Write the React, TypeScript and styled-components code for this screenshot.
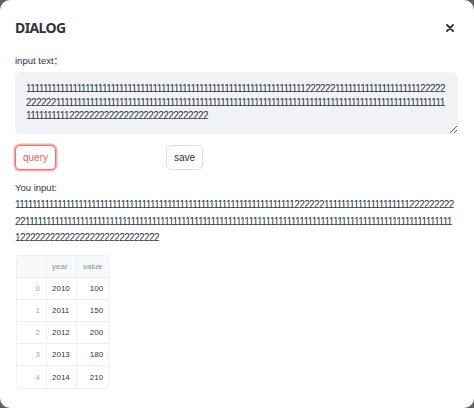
import styled, { createGlobalStyle } from "styled-components";

const GlobalStyle = createGlobalStyle`
  html, body {
    margin: 0;
    padding: 0;
    background: #5e5f63;
  }
  body {
    font-family: "Liberation Sans", Arial, sans-serif;
    color: #31333f;
  }
`;

// the same text, cut where each box wraps it
const TEXTAREA_LINES = [
  "1".repeat(66) + "2".repeat(6) + "1".repeat(20) + "2".repeat(5),
  "2".repeat(6) + "1".repeat(92),
  "1".repeat(10) + "2".repeat(28)
];

const OUTPUT_LINES = [
  "1".repeat(66) + "2".repeat(6) + "1".repeat(20) + "2".repeat(9),
  "2".repeat(2) + "1".repeat(101),
  "1" + "2".repeat(28)
];

const ROWS = [
  { year: 2010, value: 100 },
  { year: 2011, value: 150 },
  { year: 2012, value: 200 },
  { year: 2013, value: 180 },
  { year: 2014, value: 210 }
];

export default function App() {
  return (
    <>
      <GlobalStyle />
      <Dialog>
        <Header>
          <Title>DIALOG</Title>
          <CloseButton aria-label="Close">
            <svg width="8" height="8" viewBox="0 0 8 8">
              <path
                d="M1 1 L7 7 M7 1 L1 7"
                stroke="#31333f"
                strokeWidth="1.8"
                strokeLinecap="round"
              />
            </svg>
          </CloseButton>
        </Header>

        <Label>input text：</Label>
        <TextArea
          defaultValue={TEXTAREA_LINES.join("\n")}
          wrap="off"
          spellCheck={false}
        />

        <ButtonRow>
          <div>
            <Button $focused>query</Button>
          </div>
          <div>
            <Button>save</Button>
          </div>
          <div />
        </ButtonRow>

        <Output>
          <Caption>You input:</Caption>
          <Digits>{OUTPUT_LINES.join("\n")}</Digits>
        </Output>

        <Table>
          <thead>
            <tr>
              <HeadCell $index />
              <HeadCell>year</HeadCell>
              <HeadCell $numeric>value</HeadCell>
            </tr>
          </thead>
          <tbody>
            {ROWS.map((row, idx) => (
              <tr key={row.year}>
                <IndexCell>{idx}</IndexCell>
                <Cell>{row.year}</Cell>
                <Cell $numeric>{row.value}</Cell>
              </tr>
            ))}
          </tbody>
        </Table>
      </Dialog>
    </>
  );
}

const Dialog = styled.div`
  width: 474px;
  height: 408px;
  box-sizing: border-box;
  background: #ffffff;
  border-radius: 10px;
  padding: 18px 16px 0 15px;
  display: flex;
  flex-direction: column;
  align-items: stretch;
`;

const Header = styled.div`
  display: flex;
  justify-content: space-between;
  align-items: center;
  height: 20px;
`;

const Title = styled.h2`
  margin: 0;
  font-family: "Noto Sans", "Liberation Sans", sans-serif;
  font-size: 14px;
  font-weight: 700;
  letter-spacing: -0.6px;
  line-height: 20px;
  color: #31333f;
`;

const CloseButton = styled.button`
  width: 16px;
  height: 16px;
  padding: 0;
  border: none;
  background: transparent;
  display: flex;
  align-items: center;
  justify-content: center;
  cursor: pointer;
`;

const Label = styled.div`
  margin-top: 16px;
  font-size: 9.5px;
  line-height: 14px;
  color: #31333f;
  font-family: "Liberation Sans", "Noto Sans CJK SC", sans-serif;
`;

const TextArea = styled.textarea`
  margin-top: 4px;
  width: 100%;
  height: 62px;
  box-sizing: border-box;
  padding: 10px 11px 10px 11px;
  border: none;
  border-radius: 6px;
  background: #f0f2f6;
  color: #31333f;
  font-family: "Liberation Sans", Arial, sans-serif;
  font-size: 10px;
  letter-spacing: -0.6px;
  line-height: 13.5px;
  resize: vertical;
  overflow: hidden;
  outline: none;
`;

const ButtonRow = styled.div`
  margin-top: 11px;
  display: grid;
  grid-template-columns: repeat(3, 1fr);
  column-gap: 10px;
`;

const Button = styled.button<{ $focused?: boolean }>`
  height: 25px;
  padding: 0 7px;
  box-sizing: border-box;
  border-radius: 5px;
  background: #ffffff;
  font-family: "Liberation Sans", Arial, sans-serif;
  font-size: 10px;
  cursor: pointer;
  border: 1px solid ${(p) => (p.$focused ? "#ff6b6b" : "#dcdee3")};
  color: ${(p) => (p.$focused ? "#f05a5a" : "#31333f")};
  box-shadow: ${(p) =>
    p.$focused ? "0 0 0 1.5px rgba(255, 90, 90, 0.5)" : "none"};
`;

const Output = styled.div`
  margin-top: 10px;
  font-size: 9.5px;
  line-height: 16.8px;
  color: #31333f;
`;

const Caption = styled.div``;

const Digits = styled.div`
  font-size: 10px;
  letter-spacing: -0.6px;
  white-space: pre;
`;

const Table = styled.table`
  margin-top: 8px;
  align-self: flex-start;
  margin-left: 1px;
  border-collapse: separate;
  border-spacing: 0;
  border: 1px solid #eceef2;
  border-radius: 4px;
  overflow: hidden;
  font-size: 8px;
  table-layout: fixed;

  tr > *:last-child {
    border-right: none;
  }
  tbody tr:last-child > * {
    border-bottom: none;
  }
`;

const HeadCell = styled.th<{ $numeric?: boolean; $index?: boolean }>`
  height: 22px;
  width: ${(p) => (p.$index ? "30px" : p.$numeric ? "31px" : "30px")};
  padding: 0 ${(p) => (p.$numeric ? "6px" : "5px")};
  box-sizing: border-box;
  background: #f8f9fb;
  color: #8a8d98;
  font-weight: 400;
  text-align: ${(p) => (p.$numeric ? "right" : "left")};
  border-right: 1px solid #eceef2;
  border-bottom: 1px solid #eceef2;
`;

const Cell = styled.td<{ $numeric?: boolean }>`
  height: 22px;
  padding: 0 5px;
  box-sizing: border-box;
  color: #31333f;
  text-align: ${(p) => (p.$numeric ? "right" : "left")};
  border-right: 1px solid #eceef2;
  border-bottom: 1px solid #eceef2;
`;

const IndexCell = styled(Cell)`
  text-align: right;
  padding-right: 6px;
  color: #a3a6b0;
`;
